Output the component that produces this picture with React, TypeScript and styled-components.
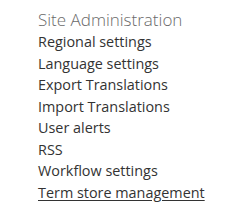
import React from 'react';
import styled, { createGlobalStyle } from 'styled-components';

const GlobalStyle = createGlobalStyle`
  body {
    margin: 0;
    background: #ffffff;
    font-family: 'Open Sans', 'Noto Sans', sans-serif;
  }
`;

const Panel = styled.div`
  padding: 8px 0 0 38px;
`;

const Heading = styled.h2`
  margin: 0;
  font-size: 17px;
  font-weight: 300;
  line-height: 23px;
  color: #6a6a6a;
`;

const LinkList = styled.ul`
  list-style: none;
  margin: 0;
  padding: 0;
`;

const Item = styled.li`
  font-size: 14.4px;
  line-height: 21.5px;
`;

const ItemLink = styled.a<{ $active?: boolean }>`
  color: #333333;
  text-decoration: ${(p) => (p.$active ? 'underline' : 'none')};
  text-underline-offset: 2px;
  cursor: pointer;
`;

const links = [
  'Regional settings',
  'Language settings',
  'Export Translations',
  'Import Translations',
  'User alerts',
  'RSS',
  'Workflow settings',
  'Term store management',
];

const App: React.FC = () => (
  <>
    <GlobalStyle />
    <Panel>
      <Heading>Site Administration</Heading>
      <LinkList>
        {links.map((label, i) => (
          <Item key={label}>
            <ItemLink $active={i === links.length - 1}>{label}</ItemLink>
          </Item>
        ))}
      </LinkList>
    </Panel>
  </>
);

export default App;
